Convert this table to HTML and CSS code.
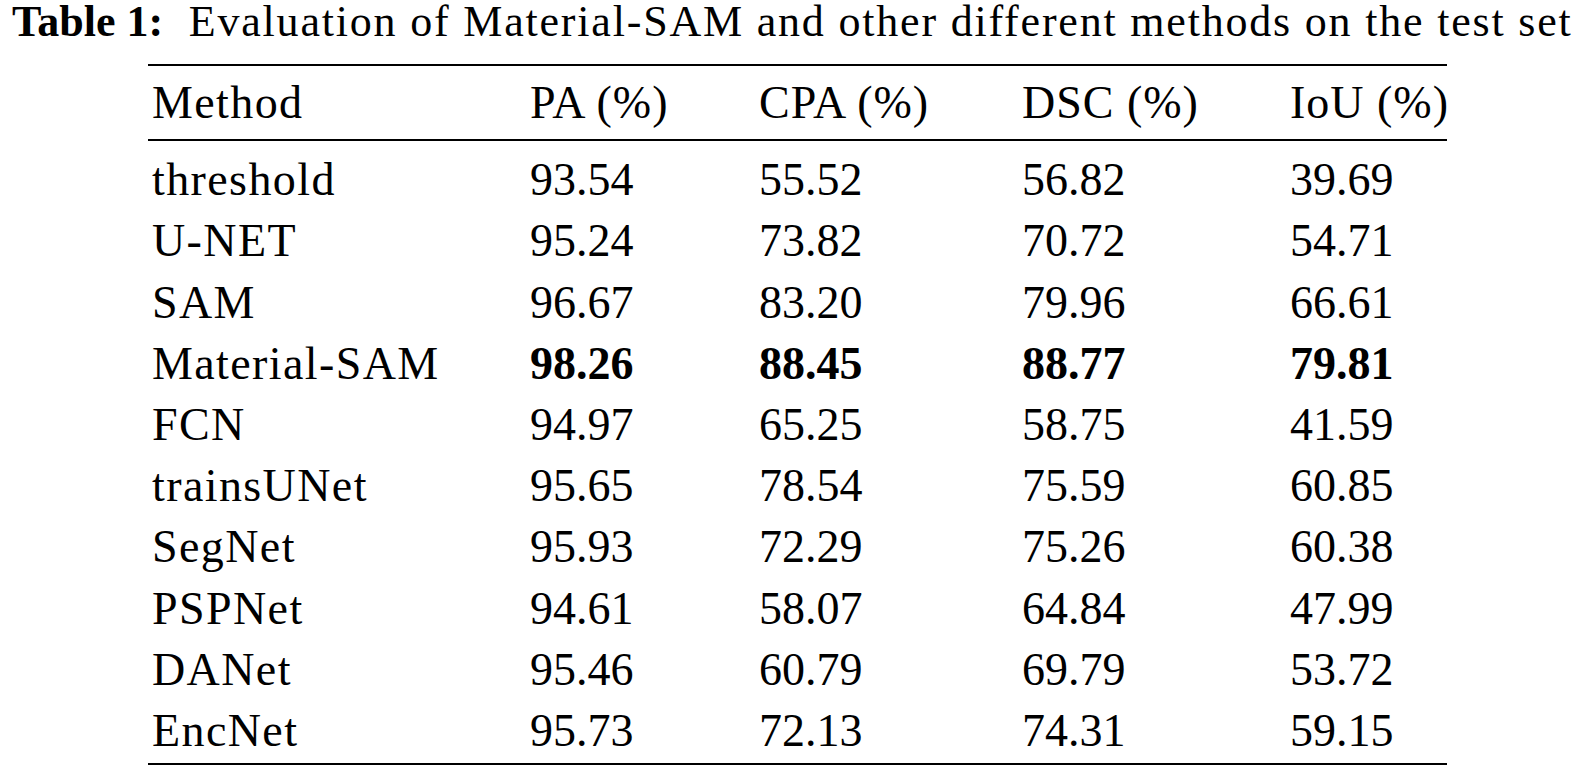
FILE: index.html
```html
<!DOCTYPE html>
<html>
<head>
<meta charset="utf-8">
<link rel="stylesheet" href="styles.css">
</head>
<body>
<div class="caption"><span class="label">Table 1:</span><span class="text">&nbsp; Evaluation of Material-SAM and other different methods on the test set</span></div>
<div class="table">
  <div class="row head">
    <div>Method</div><div>PA (%)</div><div>CPA (%)</div><div>DSC (%)</div><div>IoU (%)</div>
  </div>
  <div class="body">
    <div class="row"><div>threshold</div><div>93.54</div><div>55.52</div><div>56.82</div><div>39.69</div></div>
    <div class="row"><div>U-NET</div><div>95.24</div><div>73.82</div><div>70.72</div><div>54.71</div></div>
    <div class="row"><div>SAM</div><div>96.67</div><div>83.20</div><div>79.96</div><div>66.61</div></div>
    <div class="row"><div>Material-SAM</div><div class="b">98.26</div><div class="b">88.45</div><div class="b">88.77</div><div class="b">79.81</div></div>
    <div class="row"><div>FCN</div><div>94.97</div><div>65.25</div><div>58.75</div><div>41.59</div></div>
    <div class="row"><div>trainsUNet</div><div>95.65</div><div>78.54</div><div>75.59</div><div>60.85</div></div>
    <div class="row"><div>SegNet</div><div>95.93</div><div>72.29</div><div>75.26</div><div>60.38</div></div>
    <div class="row"><div>PSPNet</div><div>94.61</div><div>58.07</div><div>64.84</div><div>47.99</div></div>
    <div class="row"><div>DANet</div><div>95.46</div><div>60.79</div><div>69.79</div><div>53.72</div></div>
    <div class="row"><div>EncNet</div><div>95.73</div><div>72.13</div><div>74.31</div><div>59.15</div></div>
  </div>
</div>
</body>
</html>
```
FILE: styles.css
```css
html, body {
  margin: 0;
  padding: 0;
  background: #ffffff;
  color: #000000;
  font-family: "Liberation Serif", "Times New Roman", serif;
}
.caption {
  padding-left: 12px;
  font-size: 44px;
  line-height: 44px;
  white-space: nowrap;
}
.label {
  font-weight: bold;
}
.text {
  letter-spacing: 1.8px;
}
.table {
  margin-left: 148px;
  width: 1299px;
  margin-top: 20px;
  border-top: 2px solid #000;
  border-bottom: 2px solid #000;
  font-size: 46px;
}
.row {
  display: grid;
  grid-template-columns: 382px 229px 263px 268px 157px;
  line-height: 61.2px;
  white-space: nowrap;
}
.row > div:first-child {
  padding-left: 4px;
  letter-spacing: 1.4px;
}
.head > div {
  letter-spacing: 1px;
}
.head {
  padding: 6px 0;
  border-bottom: 2px solid #000;
}
.body {
  padding-top: 8px;
  padding-bottom: 2px;
}
.b {
  font-weight: bold;
}
```
